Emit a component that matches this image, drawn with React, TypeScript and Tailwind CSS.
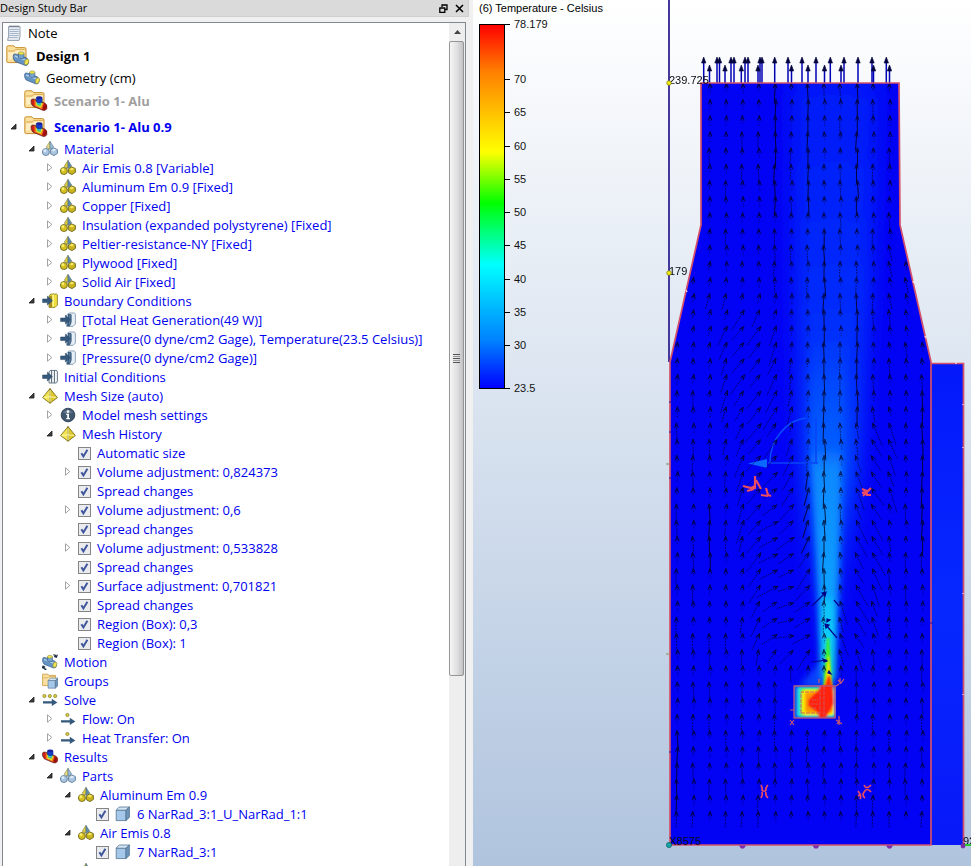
import React from "react";

type IconName =
  | "note" | "designFolder" | "pipe" | "scenarioFolder" | "partsBlue" | "partsYellow"
  | "boundary" | "condition" | "initial" | "mesh" | "info" | "motion" | "groups"
  | "solve" | "flow" | "results" | "cube" | "none";

function Sphere({ x, y, r, yellow }: { x: number; y: number; r: number; yellow: boolean }) {
  return (
    <g>
      <circle cx={x} cy={y} r={r} fill={yellow ? "#d6c022" : "#a9c4df"} stroke={yellow ? "#6c651a" : "#5e7d9c"} strokeWidth="0.9" />
      <circle cx={x - 1} cy={y - 1.2} r={r * 0.42} fill={yellow ? "#f6ed6c" : "#dcebf7"} />
    </g>
  );
}

function Parts({ yellow }: { yellow: boolean }) {
  return (
    <g>
      <path d="M8 0.4 L4.2 6.2 L8 8.4 Z" fill={yellow ? "#dfcf3c" : "#e9df83"} stroke="#85804a" strokeWidth="0.6" />
      <path d="M8 0.4 L11.6 6 L8 8.4 Z" fill={yellow ? "#5f8ba6" : "#9dbfda"} stroke="#4f7088" strokeWidth="0.6" />
      <Sphere x={3.9} y={11} r={3.5} yellow={yellow} />
      <path d="M8.4 9 L11.6 6.8 L15.4 8.6 L15.4 12.4 L12 14.6 L8.4 12.8 Z" fill={yellow ? "#cab41e" : "#a9c4df"} stroke={yellow ? "#6c651a" : "#5e7d9c"} strokeWidth="0.9" />
      <path d="M9.4 9.2 L11.7 7.7 L14.3 8.8 L12 10.4 Z" fill={yellow ? "#f4e866" : "#e0edf8"} />
    </g>
  );
}

function BluePipe() {
  return (
    <g>
      <path d="M0.6 5 Q0.6 2.2 3.4 3.2 L13.4 6.8 Q15.8 8.6 15 12 Q14.2 14.6 11.6 13.8 L2.2 10 Q0.4 8 0.6 5Z" fill="#6493c4" stroke="#3e638c" strokeWidth="0.8" />
      <path d="M2 5 L12 8.8" stroke="#a8c8e6" strokeWidth="1.6" />
      <path d="M5.6 2.4 L5.6 6.6 Q8 8.6 10.8 6.8 L10.8 2.4Z" fill="#77a3cf" stroke="#3e638c" strokeWidth="0.7" />
      <ellipse cx="8.2" cy="2.3" rx="2.7" ry="1.5" fill="#efe04c" stroke="#7d8f4c" strokeWidth="0.5" />
      <ellipse cx="13.4" cy="10.6" rx="1.9" ry="2.9" transform="rotate(20 13.4 10.6)" fill="#f1e24f" stroke="#8d8a33" strokeWidth="0.6" />
    </g>
  );
}

function HotPipe() {
  return (
    <g>
      <path d="M0.4 4.8 Q0.6 2.4 3.4 3.2 L14 7.2 Q16 9 15.4 12.2 Q14.4 14.6 11.6 13.8 L2.2 9.8 Q0.2 7.6 0.4 4.8Z" fill="#cf1f14" stroke="#552020" strokeWidth="0.7" />
      <path d="M3.6 4 L12.4 7.4 L10.8 12.8 L3.8 9.8Z" fill="#f2811b" />
      <path d="M5 5 L11.4 7 L9.8 11.4 L5.4 9.4Z" fill="#e8e02c" />
      <path d="M5.6 5.6 H10.8 L9.4 10 L6.4 9Z" fill="#5ad05a" />
      <path d="M5.6 5 H10.8 L9.4 8.4 L6.4 8Z" fill="#27b6de" />
      <path d="M5.4 1.8 V5.6 Q8 7.4 11 6 V1.8Z" fill="#143fce" stroke="#142a70" strokeWidth="0.6" />
      <ellipse cx="8.2" cy="1.9" rx="2.8" ry="1.4" fill="#1620a0" />
      <ellipse cx="13.7" cy="10.6" rx="1.7" ry="2.8" transform="rotate(20 13.7 10.6)" fill="#9c120f" />
    </g>
  );
}

function Folder() {
  return (
    <g>
      <path d="M0.8 3.2 Q0.8 1.8 2.2 1.8 H8 L9.6 3.6 H18.6 Q20 3.6 20 5 V17.6 Q20 18.6 18.6 18.6 H2.2 Q0.8 18.6 0.8 17.2Z" fill="#fbdf9c" stroke="#c98f2e" strokeWidth="1" />
      <path d="M2.2 7 H8.2 L9.8 5.4 H18.8" fill="none" stroke="#d7a545" strokeWidth="0.9" />
      <path d="M2.2 8.2 H8.4 L10 6.4 H18.8 V10 L2.2 16Z" fill="#ffeec4" />
    </g>
  );
}

function InArrow() {
  return <path d="M0.6 6 H5.4 V3.2 L10.4 7.6 L5.4 12 V9.6 H0.6Z" fill="#35597c" stroke="#223f5c" strokeWidth="0.5" />;
}

function Cube() {
  return (
    <g strokeLinejoin="round" stroke="#54728f" strokeWidth="0.8">
      <path d="M1.2 4.2 H11 V14.6 H1.2Z" fill="#a5c8ea" />
      <path d="M1.2 4.2 L4.2 1 H14.4 L11 4.2Z" fill="#d5e7f7" />
      <path d="M11 4.2 L14.4 1 V11.4 L11 14.6Z" fill="#6c95bd" />
    </g>
  );
}

function Icon({ name }: { name: IconName }) {
  if (name === "none") return null;
  if (name === "designFolder" || name === "scenarioFolder") {
    return (
      <svg viewBox="0 0 24 24" className="h-6 w-6 shrink-0" aria-hidden="true">
        <Folder />
        <g transform="translate(6.6 6.8) scale(1.05)">{name === "designFolder" ? <BluePipe /> : <HotPipe />}</g>
      </svg>
    );
  }
  return (
    <svg viewBox="0 0 16 16" className="mb-[2px] h-4 w-4 shrink-0" aria-hidden="true">
      {name === "note" && (
        <g>
          <path d="M2.6 1.5 H14 V11.5 L13 15.4 H1.6 L2.6 11Z" fill="#e9eef5" stroke="#8793a3" strokeWidth="0.9" />
          <path d="M4 0.4 V2.4 M6 0.4 V2.4 M8 0.4 V2.4 M10 0.4 V2.4 M12 0.4 V2.4" stroke="#596675" strokeWidth="0.9" />
          <path d="M3.6 4.5 H12.8 M3.6 6.5 H12.8 M3.6 8.5 H12.8 M3.4 10.5 H12.6 M3 12.5 H12.2" stroke="#9dafc4" strokeWidth="0.9" />
        </g>
      )}
      {name === "pipe" && <BluePipe />}
      {name === "results" && <HotPipe />}
      {name === "partsBlue" && <Parts yellow={false} />}
      {name === "partsYellow" && <Parts yellow />}
      {name === "boundary" && (
        <g>
          <path d="M7 2.8 L9 1 H14.6 Q15.6 1.4 15.4 3 V12 L13 14.4 H7Z" fill="#f0df3d" stroke="#817820" strokeWidth="0.8" />
          <path d="M7 2.8 H10 V14.4 H7Z" fill="#a3911f" />
          <path d="M11.2 1.8 V13.6" stroke="#fbf5a0" strokeWidth="1.4" />
          <InArrow />
        </g>
      )}
      {name === "condition" && (
        <g>
          <path d="M6.6 3 L9 1 H14.4 Q15.6 1.6 15.4 3 V12 L13 14.4 H6.6Z" fill="#e6eef6" stroke="#7890a8" strokeWidth="0.8" />
          <path d="M8 2 H10.8 Q12 2.6 11.6 5 V10 Q11 13.4 9.4 14.2 H7Z" fill="#385a7c" />
          <path d="M9.8 2.6 V12.8" stroke="#7697b5" strokeWidth="0.8" />
          <InArrow />
        </g>
      )}
      {name === "initial" && (
        <g>
          <path d="M7 3 Q7.6 1.4 9 1.4 H14 Q15.4 1.6 15.4 3 V12 Q15.2 13.8 14 14 H7Z" fill="#f7f9fb" stroke="#586a7c" strokeWidth="0.9" />
          <path d="M9.6 1.6 V13.8 M12.4 1.6 V13.8" stroke="#405367" strokeWidth="0.9" />
          <InArrow />
        </g>
      )}
      {name === "mesh" && (
        <g strokeLinejoin="round" strokeWidth="0.9" stroke="#7c701a">
          <path d="M8 0.6 L0.6 9.6 L8 15.2 Z" fill="#f2e450" />
          <path d="M8 0.6 L15.4 9.6 L8 15.2 Z" fill="#dcc72c" />
          <path d="M1.8 9.5 L8 8.8 L14.2 9.5" fill="none" stroke="#fffbb8" />
          <path d="M8 2 V14.2" fill="none" stroke="#fffbb8" strokeWidth="1" />
        </g>
      )}
      {name === "info" && (
        <g>
          <circle cx="8" cy="8" r="6.8" fill="#41566f" stroke="#223449" strokeWidth="0.8" />
          <path d="M3 5.6 Q8 0 13 5.6 Q8 8 3 5.6Z" fill="#75879c" opacity="0.6" />
          <circle cx="8" cy="4.6" r="1.3" fill="#fff" />
          <path d="M6.2 6.8 H9 V11 H10 V12.200 H6.2 V11 H7.2 V8 H6.2Z" fill="#fff" />
        </g>
      )}
      {name === "motion" && (
        <g>
          <g transform="translate(0 0.6) scale(0.96)"><BluePipe /></g>
          <path d="M11.400 0.8 Q13.6 0.6 14.4 2.6 M15.4 0.6 L14.4 3.2 L12.2 2.4 M4.4 15.4 Q2 15.4 1.2 13 M0.2 14.400 L1.1 12 L3.2 13.2" fill="none" stroke="#1c2c3e" strokeWidth="1.2" />
        </g>
      )}
      {name === "groups" && (
        <g>
          <path d="M0.6 1.2 H6 L7 2.4 H13.6 V12.6 H0.6Z" fill="#fae0a0" stroke="#c9983f" strokeWidth="0.8" />
          <path d="M1.4 4.8 H5.8 L7 3.6 H13" fill="none" stroke="#d3a24b" strokeWidth="0.7" />
          <g transform="translate(5.2 4.4) scale(0.74)"><Cube /></g>
        </g>
      )}
      {(name === "solve" || name === "flow") && (
        <g>
          <path d="M1 9.2 H9.8 V6.8 L15.4 10.4 L9.8 14 V11.6 H1Z" fill="#35597c" />
          {(name === "solve" ? [2.4, 7.8, 13.2] : [7.4]).map((x) => (
            <circle key={x} cx={x} cy="4" r="1.6" fill="#dccc35" stroke="#817924" strokeWidth="0.7" />
          ))}
        </g>
      )}
      {name === "cube" && <Cube />}
    </svg>
  );
}

type Row = {
  label: string;
  depth: number;
  icon: IconName;
  open?: boolean;
  check?: boolean;
  tone?: "black" | "grey" | "bold" | "boldBlack";
};

const branch = (label: string, depth: number, icon: IconName, open?: boolean): Row => ({ label, depth, icon, open });
const tick = (label: string, open?: boolean): Row => ({ label, depth: 3, icon: "none", check: true, open });

const rows: Row[] = [
  { label: "Note", depth: -1, icon: "note", tone: "black" },
  { label: "Design 1", depth: -1, icon: "designFolder", tone: "boldBlack" },
  { label: "Geometry (cm)", depth: 0, icon: "pipe", tone: "black" },
  { label: "Scenario 1- Alu", depth: 0, icon: "scenarioFolder", tone: "grey" },
  { label: "Scenario 1- Alu 0.9", depth: 0, icon: "scenarioFolder", tone: "bold", open: true },
  branch("Material", 1, "partsBlue", true),
  branch("Air Emis 0.8 [Variable]", 2, "partsYellow", false),
  branch("Aluminum Em 0.9 [Fixed]", 2, "partsYellow", false),
  branch("Copper [Fixed]", 2, "partsYellow", false),
  branch("Insulation (expanded polystyrene) [Fixed]", 2, "partsYellow", false),
  branch("Peltier-resistance-NY [Fixed]", 2, "partsYellow", false),
  branch("Plywood [Fixed]", 2, "partsYellow", false),
  branch("Solid Air [Fixed]", 2, "partsYellow", false),
  branch("Boundary Conditions", 1, "boundary", true),
  branch("[Total Heat Generation(49 W)]", 2, "condition", false),
  branch("[Pressure(0 dyne/cm2 Gage), Temperature(23.5 Celsius)]", 2, "condition", false),
  branch("[Pressure(0 dyne/cm2 Gage)]", 2, "condition", false),
  branch("Initial Conditions", 1, "initial"),
  branch("Mesh Size (auto)", 1, "mesh", true),
  branch("Model mesh settings", 2, "info", false),
  branch("Mesh History", 2, "mesh", true),
  tick("Automatic size"),
  tick("Volume adjustment: 0,824373", false),
  tick("Spread changes"),
  tick("Volume adjustment: 0,6", false),
  tick("Spread changes"),
  tick("Volume adjustment: 0,533828", false),
  tick("Spread changes"),
  tick("Surface adjustment: 0,701821", false),
  tick("Spread changes"),
  tick("Region (Box): 0,3"),
  tick("Region (Box): 1"),
  branch("Motion", 1, "motion"),
  branch("Groups", 1, "groups"),
  branch("Solve", 1, "solve", true),
  branch("Flow: On", 2, "flow", false),
  branch("Heat Transfer: On", 2, "flow", false),
  branch("Results", 1, "results", true),
  branch("Parts", 2, "partsBlue", true),
  branch("Aluminum Em 0.9", 3, "partsYellow", true),
  { label: "6 NarRad_3:1_U_NarRad_1:1", depth: 4, icon: "cube", check: true },
  branch("Air Emis 0.8", 3, "partsYellow", true),
  { label: "7 NarRad_3:1", depth: 4, icon: "cube", check: true },
  branch("", 3, "partsYellow"),
];

const indents: Record<number, string> = {
  [-1]: "pl-[3px]",
  0: "pl-[3px]",
  1: "pl-[21px]",
  2: "pl-[39px]",
  3: "pl-[57px]",
  4: "pl-[75px]",
};

const tones = {
  blue: "text-[#0000f0]",
  black: "text-black",
  grey: "font-bold text-[#a0a0a0]",
  bold: "font-bold text-[#0000f0]",
  boldBlack: "font-bold text-black",
};

function TreeRow({ row, index }: { row: Row; index: number }) {
  const tall = row.icon === "designFolder" || row.icon === "scenarioFolder";
  const id = `node-${index}`;
  return (
    <li className={`flex shrink-0 items-center ${tall ? "h-[26px]" : "h-[19px]"} ${indents[row.depth]}`}>
      {row.depth >= 0 && (
        <span className="flex w-[18px] shrink-0 justify-center pr-1 pb-[2px]">
          {row.open !== undefined && (
            <button type="button" aria-expanded={row.open} aria-label={`Toggle ${row.label}`}>
              <svg viewBox="0 0 9 9" className="h-[9px] w-[9px]" aria-hidden="true">
                {row.open ? (
                  <path d="M7 2 V7 H2Z" fill="#3c3c3c" stroke="#1c1c1c" strokeWidth="0.8" />
                ) : (
                  <path d="M2.5 0.8 L6.8 4.5 L2.5 8.2Z" fill="#fff" stroke="#999" strokeWidth="0.9" />
                )}
              </svg>
            </button>
          )}
        </span>
      )}
      {row.check && (
        <span className="mr-[6px] mb-px grid h-[13px] w-[13px] shrink-0">
          <input
            id={id}
            type="checkbox"
            defaultChecked
            className="peer col-start-1 row-start-1 h-[13px] w-[13px] appearance-none border border-[#858585] bg-[#e9ebee]"
          />
          <svg viewBox="0 0 13 13" className="pointer-events-none col-start-1 row-start-1 hidden h-[13px] w-[13px] peer-checked:block" aria-hidden="true">
            <path d="M3.4 6.2 L5.4 9.4 L9.4 2.8" fill="none" stroke="#3f559b" strokeWidth="2" />
          </svg>
        </span>
      )}
      <Icon name={row.icon} />
      <label
        htmlFor={row.check ? id : undefined}
        className={`whitespace-pre leading-[19px] ${row.icon === "none" ? "" : "pl-[6px]"} ${tones[row.tone ?? "blue"]}`}
      >
        {row.label}
      </label>
    </li>
  );
}

function StudyBar() {
  return (
    <aside className="flex w-[473px] shrink-0 flex-col bg-[#f0f0f0]">
      <header className="mr-1 flex h-[17px] shrink-0 items-center border-r border-b border-[#cfcfcf] bg-[#dadada]">
        <h1 className="flex-1 text-[11px] leading-4 text-black">Design Study Bar</h1>
        <button type="button" aria-label="Float" className="mr-[7px]">
          <svg viewBox="0 0 9 9" className="h-[9px] w-[9px]" aria-hidden="true">
            <path d="M3 3 V0.5 M2.5 1 H8.5 M8 0.5 V6 M8.5 5.5 H6.5 M0.5 4 H6 M0.5 8.5 H6 M0.8 3.5 V9 M5.8 3.5 V9" fill="none" stroke="#000" strokeWidth="1.3" />
          </svg>
        </button>
        <button type="button" aria-label="Close" className="mr-1">
          <svg viewBox="0 0 9 9" className="h-[9px] w-[9px]" aria-hidden="true">
            <path d="M1 1 L8 8 M8 1 L1 8" stroke="#000" strokeWidth="1.6" />
          </svg>
        </button>
      </header>
      <div className="mt-[5px] mr-[7px] ml-[2px] flex min-h-0 flex-1 border border-b-0 border-[#828790] bg-white">
        <ul className="flex min-w-0 flex-1 flex-col overflow-hidden pt-px text-[13px]">
          {rows.map((row, index) => (
            <TreeRow key={index} row={row} index={index} />
          ))}
        </ul>
        <div className="flex w-4 shrink-0 flex-col bg-[#eeeeee]">
          <button type="button" aria-label="Scroll up" className="flex h-[18px] items-center justify-center">
            <svg viewBox="0 0 7 4" className="h-1 w-[7px]" aria-hidden="true"><path d="M3.5 0 L7 4 H0Z" fill="#444" /></svg>
          </button>
          <div className="mr-px flex h-[635px] flex-col items-center justify-center gap-px rounded-[2px] border border-[#959595] bg-linear-to-r from-[#f6f6f6] via-[#e2e2e2] to-[#c2c2c6]">
            <span className="h-px w-[7px] bg-[#555]" />
            <span className="h-px w-[7px] bg-[#999]" />
            <span className="h-px w-[7px] bg-[#555]" />
            <span className="h-px w-[7px] bg-[#999]" />
            <span className="h-px w-[7px] bg-[#555]" />
          </div>
        </div>
      </div>
    </aside>
  );
}

const ticks = [
  { text: "78.179", y: 8 },
  { text: "70", y: 63 },
  { text: "65", y: 96 },
  { text: "60", y: 130 },
  { text: "55", y: 163 },
  { text: "50", y: 196 },
  { text: "45", y: 229 },
  { text: "40", y: 263 },
  { text: "35", y: 296 },
  { text: "30", y: 329 },
  { text: "23.5", y: 372 },
];

function Legend() {
  return (
    <section className="w-[187px] shrink-0 pl-[6px] text-[11px] text-black">
      <h2 className="h-4 whitespace-nowrap leading-4">(6) Temperature - Celsius</h2>
      <svg viewBox="0 0 100 384" className="h-[384px] w-[100px]" role="img" aria-label="Temperature colour scale">
        <defs>
          <linearGradient id="scale" x1="0" x2="0" y1="0" y2="1">
            <stop offset="0" stopColor="#ff0000" />
            <stop offset="0.13" stopColor="#ff8000" />
            <stop offset="0.35" stopColor="#ffff00" />
            <stop offset="0.49" stopColor="#00ff00" />
            <stop offset="0.66" stopColor="#00ffff" />
            <stop offset="0.87" stopColor="#0080ff" />
            <stop offset="1" stopColor="#0000ff" />
          </linearGradient>
        </defs>
        <rect x="0.5" y="8.5" width="25" height="364" fill="url(#scale)" stroke="#000" />
        {ticks.map((t) => (
          <g key={t.text}>
            <path d={`M25 ${t.y + 0.5} H31`} stroke="#000" />
            <text x="35" y={t.y + 4} fill="#111">{t.text}</text>
          </g>
        ))}
      </svg>
    </section>
  );
}

const bump = (v: number, centre: number, width: number) => Math.exp(-(((v - centre) / width) ** 2));
const noise = (i: number, j: number) => {
  const s = Math.sin(i * 127.1 + j * 311.7) * 43758.5453;
  return s - Math.floor(s);
};
const ramp = (v: number, a: number, b: number) => Math.min(1, Math.max(0, (v - a) / (b - a)));

// Flow direction in degrees clockwise from straight up.
function heading(x: number, y: number) {
  const leftCentre = 745 + ramp(y, 320, 620) * 47;
  const leftSize = ramp(y, 275, 330) * (1 - ramp(y, 640, 670)) * (42 + ramp(y, 430, 620) * 36);
  const rightCentre = 880 - ramp(y, 420, 630) * 26;
  const rightSize = ramp(y, 390, 440) * (1 - ramp(y, 640, 670)) * 34;
  const left = x < 818 ? leftSize * bump(x, leftCentre, 30) : 0;
  const right = x > 832 ? rightSize * bump(x, rightCentre, 20) : 0;
  const funnel = (1 - ramp(y, 330, 400)) * ramp(y, 200, 250) * (x < 720 ? 9 : x > 880 ? -9 : 0);
  return left - right + funnel;
}

function insideDuct(x: number, y: number) {
  const inset = y < 225 ? 31 : y < 362 ? 31 * (1 - (y - 225) / 137) : 0;
  return x > 672 + inset && x < 929 - inset && !(x > 788 && x < 842 && y > 678 && y < 722);
}

function VectorField() {
  const marks: React.ReactElement[] = [];
  for (let i = 0; i < 16; i++) {
    for (let j = 0; j < 46; j++) {
      const n = noise(i, j);
      const x = 677 + i * 16.35 + (n - 0.5) * 1.4;
      const y = 86 + j * 16.18;
      if (!insideDuct(x, y)) continue;
      const angle = heading(x, y) + (noise(j, i) - 0.5) * 8;
      const steep = Math.abs(angle) > 16;
      const solid =
        (i === 6 && y < 215) || (i === 8 && y < 215) || (i === 9 && y > 220 && y < 600) ||
        (i === 11 && y < 200) || (i === 11 && y > 290 && y < 420) || (i === 15 && y > 390 && y < 540) ||
        (i === 8 && y > 460 && y < 540) || (i === 2 && y > 500 && y < 570) || (i === 0 && y > 725 && y < 800);
      const tail = solid ? 16 : steep ? 13 + n * 10 : n < 0.3 ? 13 : 3 + n * 6;
      marks.push(
        <g key={`${i}-${j}`} transform={`translate(${x.toFixed(1)} ${y.toFixed(1)}) rotate(${angle.toFixed(0)})`}>
          <path d="M0 -3 L-1.8 2.2 M0 -3 L1.8 2.2 M-1 0 H1" strokeWidth="0.9" />
          <path
            d={`M0 -1 V${tail.toFixed(0)}`}
            strokeWidth={solid ? 1 : 0.7}
            strokeDasharray={solid ? undefined : steep ? "1.5 1" : n > 0.5 ? "1 1.5" : "2 1"}
          />
        </g>
      );
    }
  }
  return <g fill="none" stroke="#000020" opacity="0.84">{marks}</g>;
}

const tallJets = [703.7, 717, 719.5, 731, 734, 745, 748, 760, 762, 774.7, 788, 802, 816, 830.3, 844, 858, 872, 886.3];
const shortJets = [709.5, 725, 741.3, 758, 791.5, 808, 824.5, 841, 873.5, 889.5];

function Jet({ x, tip }: { x: number; tip: number }) {
  return (
    <g>
      <path d={`M${x} ${tip + 4} V83`} stroke="#0000b4" strokeWidth="1.5" />
      <path d={`M${x} ${tip} L${x - 2.2} ${tip + 6} H${x + 2.2}Z`} fill="#00003c" stroke="#00003c" strokeWidth="0.6" />
    </g>
  );
}

const duct = "M701 83 H899 L900 225 L931 362 V845 H670 V362 L701 225Z";

function Plot() {
  return (
    <svg viewBox="660 0 311 866" preserveAspectRatio="xMinYMin meet" className="h-full min-w-0 flex-1 text-[11px]" role="img" aria-label="Temperature field with flow vectors">
      <defs>
        <clipPath id="duct"><path d={duct} /></clipPath>
        <clipPath id="heater"><rect x="794" y="685" width="42" height="33" /></clipPath>
        <filter id="soft1" x="-30%" y="-30%" width="160%" height="160%"><feGaussianBlur stdDeviation="1.3" /></filter>
        <filter id="soft3" x="-60%" y="-10%" width="220%" height="120%"><feGaussianBlur stdDeviation="3.5" /></filter>
        <filter id="soft10" x="-60%" y="-10%" width="220%" height="120%"><feGaussianBlur stdDeviation="10" /></filter>
        <linearGradient id="halo" x1="0" x2="0" y1="80" y2="620" gradientUnits="userSpaceOnUse">
          <stop offset="0" stopColor="#0418f8" />
          <stop offset="0.5" stopColor="#0430fc" />
          <stop offset="0.72" stopColor="#0250ff" />
          <stop offset="1" stopColor="#0250ff" stopOpacity="0.1" />
        </linearGradient>
        <linearGradient id="plume" x1="0" x2="0" y1="330" y2="680" gradientUnits="userSpaceOnUse">
          <stop offset="0" stopColor="#0458ff" stopOpacity="0" />
          <stop offset="0.33" stopColor="#055cff" />
          <stop offset="0.4" stopColor="#0a88ff" />
          <stop offset="0.75" stopColor="#0aa0ff" />
          <stop offset="0.88" stopColor="#08ccf8" />
          <stop offset="1" stopColor="#20f0c0" />
        </linearGradient>
        <linearGradient id="panel" x1="0" x2="0" y1="0" y2="1">
          <stop offset="0" stopColor="#0418fa" />
          <stop offset="0.5" stopColor="#0628ff" />
          <stop offset="1" stopColor="#0818f8" />
        </linearGradient>
      </defs>

      <path d="M669 0 V362" stroke="#44389a" strokeWidth="2" />
      {tallJets.map((x) => <Jet key={x} x={x} tip={57} />)}
      {shortJets.map((x) => <Jet key={x} x={x} tip={65} />)}

      <path d={duct} fill="#0202f4" />
      <g clipPath="url(#duct)">
        <path d="M790 70 H880 L870 300 L852 520 L836 640 H818 L806 520 L796 300Z" fill="url(#halo)" filter="url(#soft10)" />
        <path d="M808 330 H846 L842 460 L839 580 L834 680 H822 L817 580 L811 460Z" fill="url(#plume)" filter="url(#soft3)" />
        <path d="M822 600 H833 L832 690 H824Z" fill="#0cd0f8" opacity="0.7" filter="url(#soft3)" />
        <path d="M799 686 L818 664 L826 660 V690Z" fill="#0870ff" opacity="0.6" filter="url(#soft3)" />
        <path d="M827 638 L829 638 L832 690 H823Z" fill="#3cf020" filter="url(#soft1)" />
        <path d="M828 656 L829 656 L832 692 H824Z" fill="#ffe400" filter="url(#soft1)" />
        <path d="M828 676 L830 676 L834 694 H822Z" fill="#ff3000" filter="url(#soft1)" />
      </g>

      <rect x="931" y="363" width="33" height="482" fill="url(#panel)" />
      <path d="M818 463 H768 M816 463 V418" fill="none" stroke="#0a44f8" strokeWidth="1.6" />
      <path d="M770 462 C770 438 788 420 806 418" fill="none" stroke="#0a50ff" strokeWidth="1.4" />
      <path d="M748 463.5 L767 459 V468Z" fill="#0868ff" />
      <VectorField />

      <g fill="none" stroke="#00008c" strokeWidth="1.2">
        <path d="M812 606 L825 593 M837 638 L826 625 M839 606 L834 600 M812 662 L827 660" />
        <path d="M826 592 l-4 1 l3 3Z M825 624 l4 1 l-3 3Z M827 619 l3 1 l-3 2Z M827 661 l-4 -2 l1 3Z M829 671 l2 3 l-3 -1Z" fill="#00006a" />
      </g>

      <g clipPath="url(#heater)">
        <rect x="794" y="685" width="42" height="33" fill="#1458ee" />
        <g filter="url(#soft1)">
          <rect x="797" y="687" width="38" height="30" rx="3" fill="#20dce8" />
          <rect x="800" y="688" width="34" height="28" rx="3" fill="#40f030" />
          <rect x="802" y="690" width="32" height="25" rx="3" fill="#ffe800" />
          <rect x="805" y="692" width="28" height="21" rx="4" fill="#ff9800" />
          <path d="M822 684 H833 L834 704 L826 718 H819 L817 712 L808 706 V700 L818 690Z" fill="#ff2410" />
        </g>
      </g>
      <g fill="none" stroke="#ce586e" strokeWidth="1.2">
        <rect x="794" y="686" width="41" height="32" />
        <path d="M801 713 V692 H817 M801 713 H819 M820 686 V717 M824 686 V717" strokeDasharray="4 1" strokeWidth="0.9" />
        <path d="M812 700 h6 M811 704 h7 M812 708 h5" strokeDasharray="1.5 1" />
        <path d="M819 683 V679 M838 680 L841 683 L844 679 M840 684 V678 M836 686 L839 684 M790 710 h4 M790 720 l4 5 M790 725 l4 -5 M836 720 l6 4 M839 716 v9 M837 724 l3 -4" />
      </g>

      <g fill="none" stroke="#ea4c62" strokeWidth="2.200">
        <path d="M755 476 V489 M756 480 L761 489 M743 486 L751 488 L755 486 M747 491 L754 489" />
        <path d="M766 488 L768 495 L771 496 M761 495 L768 496" />
        <path d="M871 488 L863 496 M862 489 L867 491 L862 493 M867 490 V495 H871" />
      </g>
      <g fill="none" stroke="#ea4c62" strokeWidth="1.700">
        <path d="M761 785 Q763 788 762 791 M768 785 Q765 788 766 791 M761 798 Q763 795 762 792 M768 798 Q765 795 766 792 M762 791 H766" />
        <path d="M858 791 Q862 796 860 799 M865 791 Q861 795 865 798 M858 796 L861 794 M864 785 Q866 790 871 785 M864 792 Q867 787 871 792" />
      </g>

      <g fill="none" stroke="#d4506a" strokeWidth="1.7">
        <path d={duct} />
        <path d="M931 363.5 H963.500 V845" />
      </g>
      <path d="M669 402 h2 M669 432 h2 M669 478 h2 M669 752 h2 M930 623 h3" stroke="#1616a8" strokeWidth="1" />
      <path d="M686 290 l1 2 M925 336 l1 2 M913 281 l1 2 M955 363 h2 M963 404 v1 M963 447 v1 M963 593 v1 M963 694 v1" stroke="#ffd0d8" strokeWidth="1.4" />

      <g fill="#0b0b14">
        <text x="669" y="84">239.725</text>
        <text x="669" y="275">179</text>
        <text x="669" y="845">X8575</text>
        <text x="963" y="845">92</text>
      </g>
      <path d="M964 845 H971" stroke="#28c828" strokeWidth="2" />
      <g stroke="#7a7a10" strokeWidth="0.7" fill="#f4ec14">
        <circle cx="669" cy="83" r="2.3" />
        <circle cx="669" cy="273" r="2.3" />
      </g>
      <circle cx="669" cy="845" r="2.6" fill="#16a6a6" stroke="#0a5c66" strokeWidth="0.7" />
      <g fill="#7c2ca8">
        <path d="M739 845.5 h7 l-2 3 h-3Z M812.5 845.5 h7 l-2 3 h-3Z M886 845.5 h7 l-2 3 h-3Z" />
        <circle cx="963" cy="846" r="2.4" />
      </g>
      <circle cx="667.5" cy="464" r="1.3" fill="#a4a88c" />
      <circle cx="667.5" cy="654" r="1.3" fill="#a4a88c" />
    </svg>
  );
}

export default function App() {
  return (
    <div className="flex h-screen w-full overflow-hidden font-['Open_Sans','Noto_Sans',sans-serif]">
      <StudyBar />
      <main className="flex min-w-0 flex-1 bg-linear-to-b from-white to-[#b0c4de] font-['Liberation_Sans',Arial,sans-serif]">
        <Legend />
        <Plot />
      </main>
    </div>
  );
}
